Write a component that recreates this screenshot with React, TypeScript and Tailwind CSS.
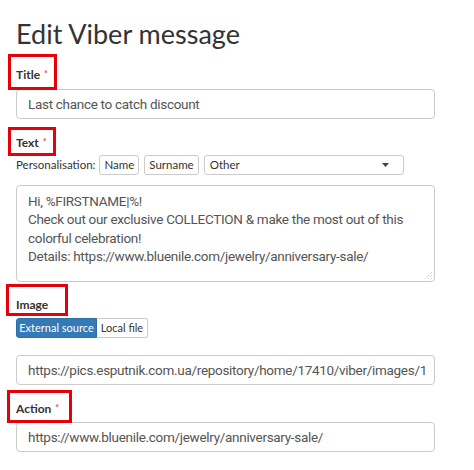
import type { ReactNode } from "react";

const inputCls =
  "box-border block h-[30px] w-[419px] rounded-[4px] border border-[#ccc] bg-white px-[11px] font-['Roboto',sans-serif] text-[13.5px] tracking-[-0.3px] leading-[28px] text-[#555]";

interface FieldLabelProps {
  children: ReactNode;
  required?: boolean;
  box: string;
  className?: string;
}

function FieldLabel({ children, required, box, className }: FieldLabelProps) {
  return (
    <div className={`relative h-[18px] ${className ?? ""}`}>
      <span className="block font-['Lato',sans-serif] text-[12px] font-bold leading-[18px] text-[#333]">
        {children}
        {required && <span className="relative -top-[2px] ml-[4px] text-[9px] text-[#d9534f]">*</span>}
      </span>
      <div className={`pointer-events-none absolute border-[3px] border-[#e6000a] ${box}`} />
    </div>
  );
}

function SmallButton({ children }: { children: ReactNode }) {
  return (
    <span className="box-border flex h-[20px] items-center rounded-[3px] border border-[#ccc] bg-white px-[4px] font-['Lato',sans-serif] text-[11.5px] text-[#333]">
      {children}
    </span>
  );
}

export default function App() {
  return (
    <div className="min-h-[470px] w-[474px] bg-white pl-4 pt-[17px]">
      <h1 className="font-['Lato',sans-serif] text-[27px] font-normal leading-[34px] text-[#333]">
        Edit Viber message
      </h1>

      <FieldLabel required className="mt-[15px]" box="-left-[8px] -top-[12px] h-[36px] w-[49px]">
        Title
      </FieldLabel>
      <div className={`${inputCls} mt-[5px]`}>Last chance to catch discount</div>

      <FieldLabel required className="mt-[15px]" box="-left-[8px] -top-[7px] h-[29px] w-[48px]">
        Text
      </FieldLabel>
      <div className="mt-[3px] flex h-[20px] items-center gap-[5px]">
        <span className="mr-[-1px] font-['Lato',sans-serif] text-[11.5px] text-[#333]">Personalisation:</span>
        <SmallButton>Name</SmallButton>
        <SmallButton>Surname</SmallButton>
        <span className="box-border flex h-[20px] w-[200px] items-center justify-between rounded-[3px] border border-[#ccc] bg-white pl-[5px] pr-[14px] font-['Lato',sans-serif] text-[11.5px] text-[#333]">
          Other
          <svg width="7" height="4" viewBox="0 0 7 4" aria-hidden>
            <path d="M0 0h7L3.5 4z" fill="#444" />
          </svg>
        </span>
      </div>
      <div className="relative mt-[10px] box-border h-[97px] w-[419px] rounded-[4px] border border-[#ccc] bg-white px-[11px] pt-[6px] font-['Roboto',sans-serif] text-[13.5px] leading-[18.3px] tracking-[-0.3px] text-[#555]">
        <p>Hi, %FIRSTNAME|%!</p>
        <p>Check out our exclusive COLLECTION &amp; make the most out of this colorful celebration!</p>
        <p>Details: https://www.bluenile.com/jewelry/anniversary-sale/</p>
        <svg className="absolute bottom-[1px] right-[1px]" width="9" height="9" viewBox="0 0 9 9" aria-hidden>
          <path d="M8 1L1 8M8 4L4 8M8 7L7 8" stroke="#bbb" strokeWidth="1" strokeDasharray="1 1" />
        </svg>
      </div>

      <FieldLabel className="mt-[14px]" box="-left-[10px] -top-[12px] h-[32px] w-[62px]">
        Image
      </FieldLabel>
      <div className="mt-[4px] flex h-[20px] whitespace-nowrap font-['Lato',sans-serif] text-[11px]">
        <span className="box-border flex w-[81px] items-center justify-center rounded-l-[3px] border border-[#2e6da4] bg-[#337ab7] text-white">
          External source
        </span>
        <span className="box-border flex w-[51px] items-center justify-center rounded-r-[3px] border border-l-0 border-[#ccc] bg-white text-[#333]">
          Local file
        </span>
      </div>
      <div className={`${inputCls} mt-[17px] overflow-hidden whitespace-nowrap`}>
        https://pics.esputnik.com.ua/repository/home/17410/viber/images/1
      </div>

      <FieldLabel required className="mt-[15px]" box="-left-[9px] -top-[10px] h-[33px] w-[65px]">
        Action
      </FieldLabel>
      <div className={`${inputCls} mt-[4px]`}>https://www.bluenile.com/jewelry/anniversary-sale/</div>
    </div>
  );
}
